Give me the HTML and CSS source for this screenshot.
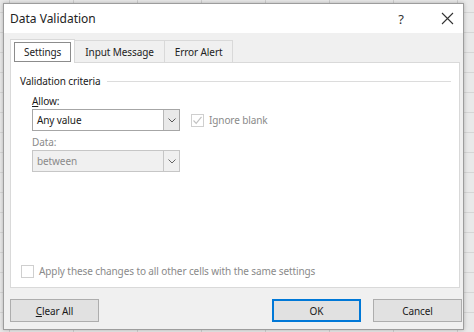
FILE: index.html
```html
<!DOCTYPE html>
<html lang="en">
<head>
<meta charset="UTF-8" />
<meta name="viewport" content="width=device-width, initial-scale=1.0" />
<title>Data Validation</title>
<link rel="stylesheet" href="styles.css">
</head>
<body>
<div class="dialog">
  <div class="titlebar">
    <span class="title">Data Validation</span>
    <span class="tb-btn help">?</span>
    <span class="tb-btn close">
      <svg width="13" height="13" viewBox="0 0 13 13"><path d="M1 1L12 12M12 1L1 12" stroke="#333" stroke-width="1.1" fill="none"/></svg>
    </span>
  </div>
  <div class="body">
    <div class="tabs">
      <div class="tab active"><span class="focus">Settings</span></div>
      <div class="tab">Input Message</div>
      <div class="tab">Error Alert</div>
    </div>
    <div class="panel">
      <div class="group-title"><span>Validation criteria</span><div class="rule"></div></div>
      <div class="criteria">
        <div class="label"><u>A</u>llow:</div>
        <div class="row">
          <div class="select">
            <span class="value">Any value</span>
            <span class="drop"><svg width="8" height="5" viewBox="0 0 8 5"><path d="M0.5 0.5L4 4L7.5 0.5" stroke="#555" fill="none"/></svg></span>
          </div>
          <label class="check disabled">
            <span class="box checked"><svg width="11" height="11" viewBox="0 0 11 11"><path d="M1.5 5.5L4.2 8.3L9.5 1.8" stroke="#c2c2c2" stroke-width="1.2" fill="none"/></svg></span>
            <span>Ignore blank</span>
          </label>
        </div>
        <div class="label dim">Data:</div>
        <div class="select disabled">
          <span class="value">between</span>
          <span class="drop"><svg width="8" height="5" viewBox="0 0 8 5"><path d="M0.5 0.5L4 4L7.5 0.5" stroke="#666" fill="none"/></svg></span>
        </div>
      </div>
      <label class="check disabled apply">
        <span class="box"></span>
        <span>Apply these changes to all other cells with the same settings</span>
      </label>
    </div>
    <div class="footer">
      <button class="btn"><u>C</u>lear All</button>
      <div class="spacer"></div>
      <button class="btn default">OK</button>
      <button class="btn">Cancel</button>
    </div>
  </div>
</div>
</body>
</html>
```
FILE: styles.css
```css
html,body{margin:0;padding:0;}
body{width:474px;height:332px;overflow:hidden;font-family:"Noto Sans","Open Sans",sans-serif;font-size:10px;letter-spacing:-0.1px;color:#1a1a1a;
  background-color:#e9e9e9;
  background-image:repeating-linear-gradient(90deg,transparent 0 9px,#cfcfcf 9px 10px,transparent 10px 64px),
                   repeating-linear-gradient(0deg,transparent 0 19px,#d6d6d6 19px 20px);}
.dialog{position:absolute;left:3px;top:3px;width:459px;height:325px;border:1px solid #9d9d9d;background:#f0f0f0;box-shadow:0 0 4px rgba(0,0,0,0.25);display:flex;flex-direction:column;}
.titlebar{height:29px;background:#fff;display:flex;align-items:center;padding-left:6px;}
.title{font-size:12px;letter-spacing:0;color:#222;flex:1;}
.tb-btn{width:32px;color:#333;display:flex;justify-content:center;align-items:center;height:29px;}
.help{font-size:13px;margin-right:14px;}
.body{flex:1;display:flex;flex-direction:column;padding:5px 1px 7px 6px;}
.tabs{display:flex;align-items:flex-end;height:24px;}
.tab{height:21px;border:1px solid #d9d9d9;border-bottom:none;background:#f0f0f0;padding:0 10px;display:flex;align-items:center;margin-left:-1px;color:#222;}
.tab.active{height:23px;background:#fff;padding:0 3px;margin-left:0;z-index:1;position:relative;top:1px;}
.focus{border:1px solid #8c8c8c;padding:1px 9px 0;height:17px;display:flex;align-items:center;}
.panel{height:224px;margin-right:2px;background:#fff;border:1px solid #d9d9d9;padding:0 0 0 9px;display:flex;flex-direction:column;}
.group-title{display:flex;align-items:center;height:18px;margin-top:9px;margin-right:8px;}
.group-title .rule{flex:1;height:1px;background:#dcdcdc;margin-left:6px;}
.criteria{padding-left:12px;margin-top:3px;}
.label{height:16px;line-height:16px;}
.label.dim{color:#8a8a8a;margin-top:3px;}
.row{display:flex;align-items:center;}
.select{width:146px;height:20px;border:1px solid #a6a6a6;display:flex;align-items:center;background:#fff;}
.select .value{flex:1;padding-left:4px;}
.select .drop{width:15px;height:20px;border-left:1px solid #b8b8b8;background:#e9e9e9;display:flex;align-items:center;justify-content:center;}
.select.disabled{background:#f0f0f0;border-color:#c6c6c6;color:#8a8a8a;}
.select.disabled .drop{background:#f0f0f0;border-left-color:#c6c6c6;}
.check{display:flex;align-items:center;}
.check.disabled{color:#8a8a8a;}
.box{width:11px;height:11px;border:1px solid #cfcfcf;background:#fff;margin-right:5px;display:flex;align-items:center;justify-content:center;}
.row .check{margin-left:11px;}
.apply{margin-top:auto;margin-bottom:9px;margin-left:1px;}
.footer{display:flex;margin-top:11px;gap:12px;}
.spacer{flex:1;}
.btn{width:89px;height:23px;border:1px solid #adadad;background:#e1e1e1;font-family:inherit;font-size:10px;letter-spacing:-0.1px;color:#1a1a1a;padding:0;}
.btn.default{border:2px solid #0078d7;}
```
